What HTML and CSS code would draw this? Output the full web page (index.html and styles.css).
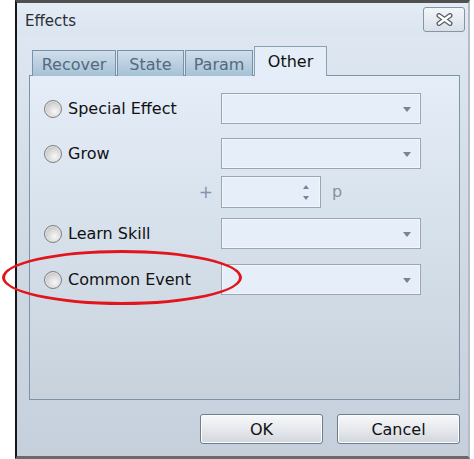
FILE: index.html
```html
<!DOCTYPE html>
<html lang="en">
<head>
    <meta charset="UTF-8">
    <title>Effects</title>
    <link rel="stylesheet" href="styles.css">
</head>
<body>
    <div class="window">
        <div class="titlebar">
            <span class="title">Effects</span>
            <button class="close" aria-label="Close">
                <svg width="19" height="13" viewBox="0 0 19 13">
                    <path d="M4 2.5 L15 10.5 M15 2.5 L4 10.5" stroke="#5a5f66" stroke-width="5" stroke-linecap="round" fill="none"/>
                    <path d="M4 2.5 L15 10.5 M15 2.5 L4 10.5" stroke="#ffffff" stroke-width="2.4" stroke-linecap="round" fill="none"/>
                </svg>
            </button>
        </div>

        <div class="tabs">
            <div class="tab tab-recover">Recover</div>
            <div class="tab tab-state">State</div>
            <div class="tab tab-param">Param</div>
            <div class="tab tab-other active">Other</div>
        </div>

        <div class="panel">
            <div class="row row-1">
                <label class="opt"><span class="radio"></span>Special Effect</label>
                <div class="combo"><span class="arrow"></span></div>
            </div>
            <div class="row row-2">
                <label class="opt"><span class="radio"></span>Grow</label>
                <div class="combo"><span class="arrow"></span></div>
            </div>
            <div class="row row-spin">
                <div class="opt plus">+</div>
                <div class="spin">
                    <span class="spin-up"></span>
                    <span class="spin-down"></span>
                </div>
                <span class="unit">p</span>
            </div>
            <div class="row row-3">
                <label class="opt"><span class="radio"></span>Learn Skill</label>
                <div class="combo"><span class="arrow"></span></div>
            </div>
            <div class="row row-4">
                <label class="opt"><span class="radio"></span>Common Event</label>
                <div class="combo"><span class="arrow"></span></div>
            </div>
        </div>

        <div class="buttons">
            <button class="btn">OK</button>
            <button class="btn">Cancel</button>
        </div>
    </div>

    <div class="highlight"></div>
</body>
</html>
```

FILE: styles.css
```css
body {
    margin: 0;
    background: #ffffff;
    font-family: "DejaVu Sans", Verdana, sans-serif;
    position: relative;
    width: 474px;
    height: 459px;
    overflow: hidden;
}
.window {
    margin-left: 15px;
    width: 455px;
    height: 459px;
    box-sizing: border-box;
    border-left: 2px solid #161616;
    border-top: 3px solid #505050;
    border-right: 2px solid #b4bcc4;
    border-bottom: 3px solid #6a6a6a;
    background: linear-gradient(#e0e9f3, #d3dde8 40%, #c5d0dc);
    display: flex;
    flex-direction: column;
}
.titlebar {
    height: 32px;
    display: flex;
    align-items: center;
    justify-content: space-between;
    padding: 0 3px 0 8px;
    background: linear-gradient(#e4ecf5, #dbe5f0);
}
.title {
    font-size: 15px;
    color: #2a2f36;
    padding-top: 3px;
}
.close {
    width: 42px;
    height: 25px;
    padding: 0;
    border: 1px solid #8894a3;
    border-radius: 3px;
    background: linear-gradient(#f2f6fa, #d8e0e9);
    display: flex;
    align-items: center;
    justify-content: center;
}
.tabs {
    margin: 11px 0 -1px 15px;
    height: 30px;
    display: flex;
    align-items: flex-end;
    gap: 1px;
    position: relative;
    z-index: 1;
}
.tab {
    height: 26px;
    box-sizing: border-box;
    border: 1px solid #7892a7;
    border-bottom: none;
    background: linear-gradient(#cfdeeb, #a6c1d5);
    color: #526a7e;
    font-size: 16px;
    display: flex;
    align-items: center;
    justify-content: center;
    padding-top: 1px;
}
.tab-recover { width: 84px; }
.tab-state { width: 67px; }
.tab-param { width: 68px; }
.tab-other { width: 73px; }
.tab.active {
    height: 30px;
    border-color: #8aa0b3;
    background: #e4edf8;
    color: #111111;
    padding-top: 0;
    padding-bottom: 0;
}
.panel {
    margin-left: 12px;
    width: 431px;
    height: 325px;
    box-sizing: border-box;
    border: 1px solid #7d93a6;
    background: linear-gradient(#e4edf8, #d6e0eb 50%, #c8d2dd);
    padding: 17px 0 0 14px;
    display: flex;
    flex-direction: column;
}
.row {
    display: flex;
    align-items: center;
    height: 31px;
}
.row-2 { margin-top: 14px; }
.row-spin { margin-top: 7px; height: 32px; }
.row-3 { margin-top: 10px; }
.row-4 { margin-top: 15px; }
.opt {
    width: 177px;
    display: flex;
    align-items: center;
    gap: 6px;
    font-size: 16px;
    color: #111111;
}
.radio {
    width: 18px;
    height: 18px;
    box-sizing: border-box;
    border-radius: 50%;
    border: 1px solid #7e7e7e;
    background: radial-gradient(circle at 60% 65%, #f8f8f8, #d4d4d4 55%, #a8a8a8);
    box-shadow: inset 0 0 0 1px #e6e6e6;
}
.combo {
    width: 200px;
    height: 31px;
    box-sizing: border-box;
    border: 1px solid #9ca6b3;
    box-shadow: inset 0 0 0 1px #f2f6fb;
    background: #e5eef9;
    position: relative;
}
.arrow {
    position: absolute;
    right: 9px;
    top: 13px;
    width: 0;
    height: 0;
    border-left: 4px solid transparent;
    border-right: 4px solid transparent;
    border-top: 5px solid #7b8297;
}
.plus {
    justify-content: flex-end;
    padding-right: 8px;
    box-sizing: border-box;
    color: #8a90ae;
    font-size: 17px;
}
.spin {
    width: 100px;
    height: 32px;
    box-sizing: border-box;
    border: 1px solid #9ca6b3;
    box-shadow: inset 0 0 0 1px #f2f6fb;
    background: #e5eef9;
    position: relative;
}
.spin-up, .spin-down {
    position: absolute;
    right: 11px;
    width: 0;
    height: 0;
    border-left: 3px solid transparent;
    border-right: 3px solid transparent;
}
.spin-up {
    top: 8px;
    border-bottom: 4px solid #7b8297;
}
.spin-down {
    top: 19px;
    border-top: 4px solid #7b8297;
}
.unit {
    margin-left: 11px;
    font-size: 16px;
    color: #8a90a8;
    padding-bottom: 2px;
}
.buttons {
    margin-top: 14px;
    padding-right: 8px;
    display: flex;
    justify-content: flex-end;
    gap: 14px;
}
.btn {
    width: 123px;
    height: 30px;
    border: 1px solid #6f7d89;
    border-radius: 3px;
    background: linear-gradient(#f7f8fa, #e6e9ed 50%, #d2d7dd);
    box-shadow: inset 0 0 0 1px #fbfcfd;
    font-family: "DejaVu Sans", Verdana, sans-serif;
    font-size: 16px;
    color: #111111;
    padding: 0;
}
.highlight {
    position: absolute;
    left: 2px;
    top: 250px;
    width: 240px;
    height: 55px;
    box-sizing: border-box;
    border: 3px solid #e2141c;
    border-radius: 50%;
}
```
